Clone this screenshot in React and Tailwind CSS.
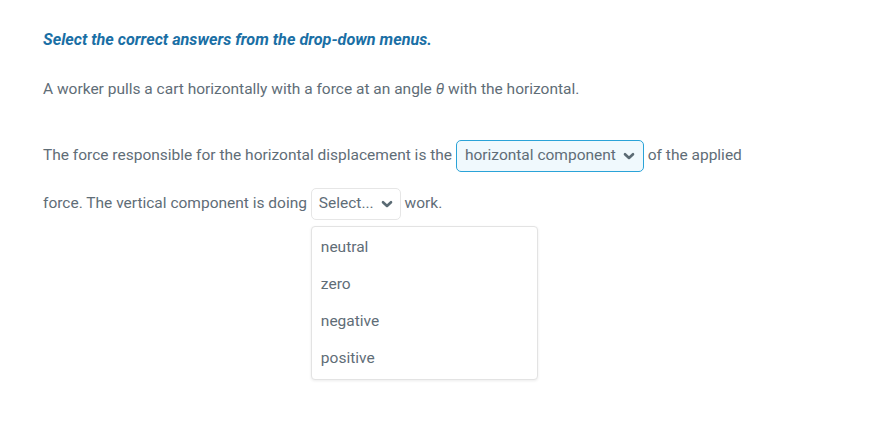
const options = ["neutral", "zero", "negative", "positive"];

function Chevron() {
  return (
    <svg width="12" height="12" viewBox="0 0 12 12" className="shrink-0">
      <path d="M2 4.2 L6 8 L10 4.2" fill="none" stroke="#5b6b74" strokeWidth="2.6" strokeLinecap="round" strokeLinejoin="round" />
    </svg>
  );
}

export default function App() {
  return (
    <div className="w-[877px] h-[445px] bg-white pl-[43px] pt-[30px] text-[#5f6d77]" style={{ fontFamily: "Roboto, 'Noto Sans', sans-serif" }}>
      {/* Instructions */}
      <h2 className="text-[16.2px] font-bold italic text-[#1a6fa5] leading-[20px]">
        Select the correct answers from the drop-down menus.
      </h2>

      <p className="mt-[28px] text-[15.5px] leading-[22px]">
        A worker pulls a cart horizontally with a force at an angle <span className="italic">θ</span> with the horizontal.
      </p>

      <div className="mt-[31px] text-[15.5px] leading-[48px] w-[740px]">
        The force responsible for the horizontal displacement is the{" "}
        <span className="inline-flex items-center gap-[7px] h-[32px] px-[8px] align-middle rounded-[5px] border border-[#2aa3d8] bg-[#f0f9fd] leading-none">
          horizontal component
          <Chevron />
        </span>{" "}
        of the applied force. The vertical component is doing{" "}
        <span className="relative inline-flex items-center gap-[7px] h-[32px] px-[7px] align-middle rounded-[5px] border border-[#e6e6e6] bg-white leading-none">
          Select...
          <Chevron />
          {/* Open menu */}
          <div className="absolute -left-px top-[37px] w-[227px] py-[2px] rounded-[4px] border border-[#e3e3e3] bg-white shadow-[0_1px_3px_rgba(0,0,0,0.08)] z-10">
            {options.map((o) => (
              <div key={o} className="h-[37px] px-[9px] flex items-center">
                {o}
              </div>
            ))}
          </div>
        </span>{" "}
        work.
      </div>
    </div>
  );
}
